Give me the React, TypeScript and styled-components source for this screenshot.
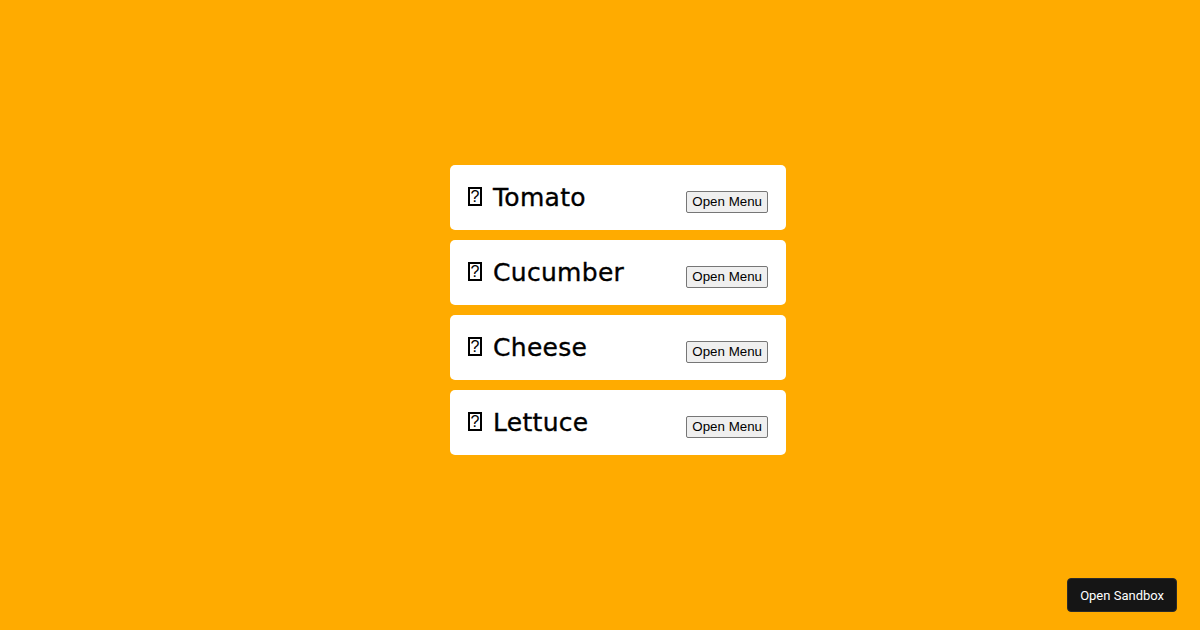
import React from "react";
import styled, {createGlobalStyle} from "styled-components";

const GlobalStyle = createGlobalStyle`
    html, body {
        margin: 0;
        padding: 0;
        height: 100%;
    }

    body {
        background: #ffab00;
        font-family: "Liberation Sans", Arial, sans-serif;
    }
`;

const Page = styled.div`
    height: 630px;
    box-sizing: border-box;
    padding: 0 0 10px 36px;
    display: flex;
    align-items: center;
    justify-content: center;
`;

const List = styled.ul`
    list-style: none;
    margin: 0;
    padding: 0;
    width: 336px;
    display: flex;
    flex-direction: column;
    gap: 10px;
`;

const Card = styled.li`
    height: 65px;
    box-sizing: border-box;
    background: #fff;
    border-radius: 5px;
    padding: 0 18px;
    display: flex;
    align-items: center;
    justify-content: space-between;
`;

const Title = styled.h2`
    margin: 0 0 10px 0;
    padding-top: 10px;
    display: flex;
    align-items: center;
    font-family: "DejaVu Sans", sans-serif;
    font-weight: 500;
    font-size: 25px;
    letter-spacing: 0.3px;
    -webkit-text-stroke: 0.35px #000;
    color: #000;
    line-height: 1;
`;

// the emoji shows as a missing-glyph box in the picture
const Tofu = styled.span`
    display: inline-flex;
    align-items: center;
    justify-content: center;
    width: 14px;
    height: 19px;
    margin: -2px 11px 0 0;
    box-sizing: border-box;
    border: 2px solid #000;
    font-family: "Liberation Sans", sans-serif;
    font-size: 16px;
    font-weight: 400;
    line-height: 1;
    letter-spacing: 0;
    -webkit-text-stroke: 0;
`;

const MenuButton = styled.button`
    font-family: "Liberation Sans", Arial, sans-serif;
    font-size: 13.33px;
    padding: 2px 5px;
    height: 22px;
    margin-top: 8px;
    border: 1px solid #767676;
    border-radius: 2px;
    background: #efefef;
    color: #000;
`;

const SandboxButton = styled.button`
    position: fixed;
    right: 23px;
    bottom: 18px;
    height: 34px;
    padding: 0 12px;
    background: #151515;
    color: #fff;
    border: 1px solid #2a2a2a;
    border-radius: 4px;
    font-family: Roboto, "Liberation Sans", sans-serif;
    font-size: 13px;
`;

const items = ["Tomato", "Cucumber", "Cheese", "Lettuce"];

export default function App() {
  return (
      <>
        <GlobalStyle/>
        <Page>
          <List>
            {items.map((name) => (
                <Card key={name}>
                  <Title><Tofu>?</Tofu>{name}</Title>
                  <MenuButton>Open Menu</MenuButton>
                </Card>
            ))}
          </List>
        </Page>
        <SandboxButton>Open Sandbox</SandboxButton>
      </>
  );
}
